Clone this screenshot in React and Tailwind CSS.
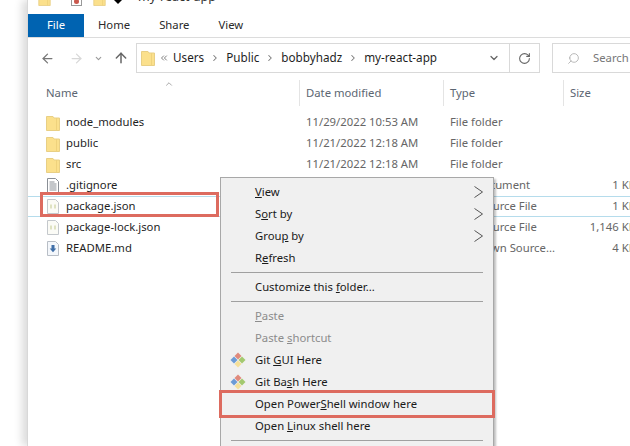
import { ArrowLeft, ArrowRight, ArrowUp, ChevronDown, ChevronRight, ChevronUp, ChevronsLeft, RotateCw, Search } from "lucide-react";

function FolderIcon({ className = "w-[14px] h-[16px]" }) {
  return (
    <svg viewBox="0 0 14 16" className={className}>
      <path d="M0.5 1.5h6.5l1 1.5h5.5v12.5h-13z" fill="#fbe08c" stroke="#e8cf85" />
      <path d="M10.5 3v12.5" stroke="#efd27c" />
    </svg>
  );
}

function TextFileIcon() {
  return (
    <svg viewBox="0 0 12 15" className="w-[12px] h-[15px]">
      <path d="M0.5 0.5h8l3 3v11h-11z" fill="#fff" stroke="#8a8f96" />
      <path d="M2.5 4h5M2.5 6h7M2.5 8h7M2.5 10h7M2.5 12h7" stroke="#8a8f96" />
    </svg>
  );
}

function JsonFileIcon() {
  return (
    <svg viewBox="0 0 12 15" className="w-[12px] h-[15px]">
      <path d="M0.5 0.5h8l3 3v11h-11z" fill="#fbfbf6" stroke="#c4c8cc" />
      <path d="M4 5.5v4M8 5.5v4" stroke="#c2c98d" />
    </svg>
  );
}

function MdFileIcon() {
  return (
    <svg viewBox="0 0 12 15" className="w-[12px] h-[15px]">
      <path d="M0.5 0.5h8l3 3v11h-11z" fill="#f4f7fb" stroke="#b8bec6" />
      <path d="M4.5 4h3v3.5h1.8l-3.3 3.7-3.3-3.7h1.8z" fill="#3f6fa8" />
    </svg>
  );
}

function GitIcon() {
  return (
    <svg viewBox="0 0 16 16" className="w-[16px] h-[16px]">
      <path d="M8 0.5l3.5 3.5-3.5 3.5-3.5-3.5z" fill="#e08a7c" />
      <path d="M4 4.5l3.5 3.5-3.5 3.5-3.5-3.5z" fill="#6c9bd6" />
      <path d="M12 4.5l3.5 3.5-3.5 3.5-3.5-3.5z" fill="#a3c96f" />
      <path d="M8 8.5l3.5 3.5-3.5 3.5-3.5-3.5z" fill="#f5e09a" />
    </svg>
  );
}

function SubmenuArrow() {
  return (
    <svg viewBox="0 0 9 12" className="w-[9px] h-[12px]">
      <path d="M0.5 0.5l8 5.5-8 5.5" fill="none" stroke="#555" />
    </svg>
  );
}

const files = [
  { name: "node_modules", date: "11/29/2022 10:53 AM", type: "File folder", size: "", icon: <FolderIcon /> },
  { name: "public", date: "11/21/2022 12:18 AM", type: "File folder", size: "", icon: <FolderIcon /> },
  { name: "src", date: "11/21/2022 12:18 AM", type: "File folder", size: "", icon: <FolderIcon /> },
  { name: ".gitignore", date: "11/21/2022 12:18 AM", type: "Text Document", size: "1 KB", icon: <TextFileIcon /> },
  { name: "package.json", date: "11/21/2022 12:18 AM", type: "JSON Source File", size: "1 KB", icon: <JsonFileIcon />, selected: true },
  { name: "package-lock.json", date: "11/21/2022 12:18 AM", type: "JSON Source File", size: "1,146 KB", icon: <JsonFileIcon /> },
  { name: "README.md", date: "11/21/2022 12:18 AM", type: "Markdown Source...", size: "4 KB", icon: <MdFileIcon /> },
];

function MenuItem({ children, icon, arrow, disabled }) {
  return (
    <div className={`relative flex items-center h-[22px] pl-[34px] pr-[10px] ${disabled ? "text-[#8c8c8c]" : "text-[#1a1a1a]"}`}>
      <span className="absolute left-[9px] top-[3px]">{icon}</span>
      <span className="flex-1">{children}</span>
      {arrow && <SubmenuArrow />}
    </div>
  );
}

function Crumb({ children }) {
  return (
    <>
      <span className="text-[#1f1f1f]">{children}</span>
      <ChevronRight className="w-[10px] h-[10px] mx-[6px] text-[#777]" strokeWidth={2.5} />
    </>
  );
}

export default function App() {
  return (
    <div className="relative w-[630px] h-[446px] overflow-hidden bg-white text-[11.3px] text-[#2a2a2a] font-['Noto_Sans','Open_Sans',sans-serif]">
      <div className="ml-[27px] w-[660px] h-[446px] bg-white border-l border-[#d8d8d8] shadow-[-5px_0_8px_rgba(0,0,0,0.14)]">
        {/* title bar, cut by the top edge */}
        <div className="flex items-end h-[14px] overflow-hidden pl-[10px]">
          <FolderIcon className="w-[13px] h-[14px] mb-[8px]" />
          <div className="ml-[20px] mb-[8px] w-[11px] h-[14px] border border-[#999] bg-white flex items-end justify-center">
            <span className="w-[5px] h-[5px] mb-[1px] rounded-full bg-[#c9584d]" />
          </div>
          <FolderIcon className="ml-[11px] w-[13px] h-[14px] mb-[8px]" />
          <div className="ml-[8px] mb-[10px] w-0 h-0 border-x-[4px] border-x-transparent border-t-[4px] border-t-black" />
          <span className="ml-[16px] mb-[8px] text-[12.5px] leading-[18px] text-[#333]">my-react-app</span>
        </div>

        {/* ribbon tabs */}
        <div className="flex items-center h-[24px] border-b border-[#dcdcdc]">
          <div className="w-[56px] h-[23px] bg-[#0063b1] text-white flex items-center justify-center">File</div>
          <span className="ml-[14px]">Home</span>
          <span className="ml-[29px]">Share</span>
          <span className="ml-[29px]">View</span>
        </div>

        {/* address bar */}
        <div className="flex items-center h-[30px] mt-[5px]">
          <ArrowLeft className="ml-[12px] w-[15px] h-[15px] text-[#777]" strokeWidth={2} />
          <ArrowRight className="ml-[14px] w-[15px] h-[15px] text-[#d8d8d8]" strokeWidth={2} />
          <ChevronDown className="ml-[10px] w-[9px] h-[9px] text-[#999]" strokeWidth={3} />
          <ArrowUp className="ml-[10px] w-[16px] h-[16px] text-[#666]" strokeWidth={2.25} />
          <div className="ml-[7px] w-[404px] h-[30px] border border-[#d9d9d9] flex items-center text-[11.7px]">
            <FolderIcon className="ml-[4px] w-[14px] h-[18px]" />
            <ChevronsLeft className="ml-[4px] mr-[4px] w-[10px] h-[10px] text-[#666]" strokeWidth={2} />
            <Crumb>Users</Crumb>
            <Crumb>Public</Crumb>
            <Crumb>bobbyhadz</Crumb>
            <span className="text-[#1f1f1f]">my-react-app</span>
            <ChevronDown className="ml-auto mr-[9px] w-[12px] h-[12px] text-[#666]" strokeWidth={2.5} />
            <div className="w-[30px] h-full border-l border-[#d9d9d9] flex items-center justify-center">
              <RotateCw className="w-[13px] h-[13px] text-[#666]" strokeWidth={2} />
            </div>
          </div>
          <div className="ml-[12px] w-[120px] h-[30px] border border-[#d9d9d9] flex items-center text-[#777]">
            <Search className="ml-[14px] w-[13px] h-[13px] -scale-x-100 text-[#aaa]" strokeWidth={1.5} />
            <span className="ml-[13px]">Search</span>
          </div>
        </div>

        {/* column headers */}
        <div className="relative grid grid-cols-[271px_144px_120px_100px] h-[26px] mt-[7px] text-[#5c6672]">
          <ChevronUp className="absolute left-[135px] -top-[1px] w-[12px] h-[10px] text-[#777]" strokeWidth={1.5} />
          <div className="flex items-center pl-[18px]">Name</div>
          <div className="flex items-center pl-[6px] border-l border-[#e4e4e4]">Date modified</div>
          <div className="flex items-center pl-[6px] border-l border-[#e4e4e4]">Type</div>
          <div className="flex items-center pl-[6px] border-l border-[#e4e4e4]">Size</div>
        </div>

        {/* file list */}
        <div className="mt-[6px]">
          {files.map((f) => (
            <div
              key={f.name}
              className={`grid grid-cols-[271px_144px_120px_73px] h-[21px] items-center ${f.selected ? "border-y border-[#b5dcec]" : ""}`}
            >
              <div className="flex items-center pl-[18px] text-[#1f1f1f]">
                <span className="w-[14px] flex justify-center">{f.icon}</span>
                <span className="ml-[6px]">{f.name}</span>
              </div>
              <div className="pl-[7px] text-[#666]">{f.date}</div>
              <div className="pl-[7px] text-[#666]">{f.type}</div>
              <div className="text-right text-[#666] whitespace-nowrap">{f.size}</div>
            </div>
          ))}
        </div>
      </div>

      {/* highlight round package.json */}
      <div className="absolute left-[40px] top-[192px] w-[179px] h-[25px] border-[3px] border-[#dd6b5f]" />

      {/* context menu */}
      <div className="absolute left-[220px] top-[177px] w-[274px] h-[280px] bg-[#f0f0f0] border border-[#a8a8a8] shadow-[2px_2px_2px_rgba(0,0,0,0.25)] pt-[3px]">
        <MenuItem arrow><u>V</u>iew</MenuItem>
        <MenuItem arrow>S<u>o</u>rt by</MenuItem>
        <MenuItem arrow>Grou<u>p</u> by</MenuItem>
        <MenuItem>R<u>e</u>fresh</MenuItem>
        <div className="h-px bg-[#a0a0a0] ml-[10px] mr-[10px] my-[3px]" />
        <MenuItem>Customize this <u>f</u>older...</MenuItem>
        <div className="h-px bg-[#a0a0a0] ml-[10px] mr-[10px] my-[3px]" />
        <MenuItem disabled><u>P</u>aste</MenuItem>
        <MenuItem disabled>Paste <u>s</u>hortcut</MenuItem>
        <MenuItem icon={<GitIcon />}>Git <u>G</u>UI Here</MenuItem>
        <MenuItem icon={<GitIcon />}>Git Ba<u>s</u>h Here</MenuItem>
        <MenuItem>Open Power<u>S</u>hell window here</MenuItem>
        <MenuItem>Open <u>L</u>inux shell here</MenuItem>
        <div className="h-px bg-[#a0a0a0] ml-[10px] mr-[10px] my-[3px]" />
      </div>

      {/* highlight round the PowerShell item */}
      <div className="absolute left-[219px] top-[390px] w-[276px] h-[28px] border-[3px] border-[#dd6b5f]" />
    </div>
  );
}
